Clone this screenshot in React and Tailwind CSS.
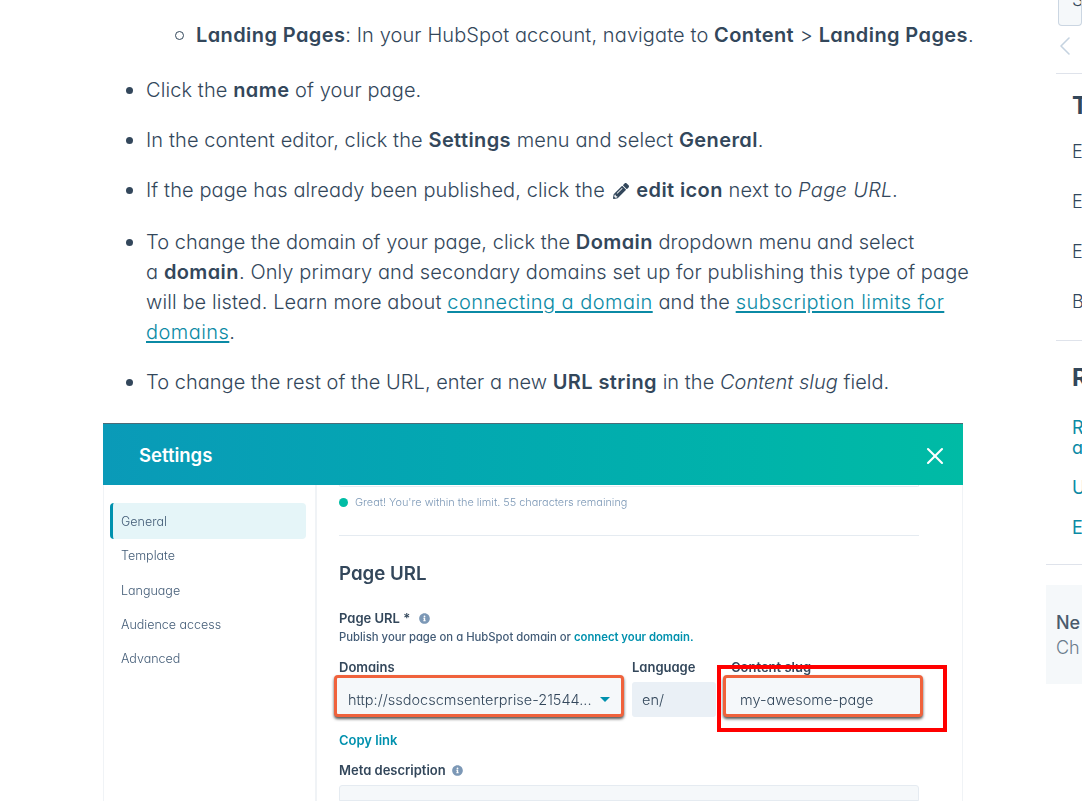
import React from "react";
import { FaPencilAlt, FaInfoCircle } from "react-icons/fa";
import { X, ChevronLeft } from "lucide-react";

const B = ({ children }) => <strong className="font-semibold tracking-[0.4px]">{children}</strong>;
const A = ({ children }) => <a className="tracking-[0.45px] text-[#0b8aa5] underline underline-offset-2">{children}</a>;

function Li({ children, className = "" }) {
  return (
    <li className={`flex items-start whitespace-nowrap ${className}`}>
      <span className="mt-[12px] mr-[13px] h-[7px] w-[7px] shrink-0 rounded-full bg-[#33475b]" />
      <div>{children}</div>
    </li>
  );
}

function Shot() {
  return (
    <div className="ml-[103px] mt-[26px] flex h-[378px] w-[860px] flex-col overflow-hidden text-[#33475b] blur-[0.3px]">
      <div className="flex h-[62px] shrink-0 items-center justify-between border-t border-[#4b6b78] bg-gradient-to-r from-[#0a9ab8] to-[#00bba5] pl-[36px] pr-[14px] pt-[2px]">
        <span className="text-[18.5px] font-semibold text-white">Settings</span>
        <X className="h-[28px] w-[28px] text-white" strokeWidth={1.8} />
      </div>
      <div className="flex min-h-0 flex-1 border-x border-[#f0f3f6]">
        <nav className="w-[213px] shrink-0 border-r-2 border-[#f0f3f6] pl-[6px] pr-[9px] pt-[18px] text-[12.5px] font-light text-[#425b76]">
          <div className="flex h-[36px] items-center rounded-sm border-l-[3px] border-[#0091ae] bg-[#e5f5f8] pl-[8px] pt-[2px]">General</div>
          <div className="flex h-[34px] items-center pl-[11px]">Template</div>
          <div className="mt-[1px] flex h-[34px] items-center pl-[11px]">Language</div>
          <div className="flex h-[34px] items-center pl-[11px]">Audience access</div>
          <div className="flex h-[34px] items-center pl-[11px]">Advanced</div>
        </nav>
        <div className="ml-[22px] flex w-[580px] flex-col">
          <div className="h-[5px] rounded-b-sm border-x border-b border-[#e5ebf1]" />
          <div className="mt-[9px] flex h-[12px] items-center text-[10.9px] font-light text-[#7c98b6]">
            <span className="mr-[7px] h-[9px] w-[9px] rounded-full bg-[#00bda5]" />
            Great! You're within the limit. 55 characters remaining
          </div>
          <div className="mt-[27px] border-t border-[#e5ebf1]" />
          <h2 className="mt-[26px] text-[18.7px] font-semibold leading-[24px]">Page URL</h2>
          <div className="mt-[23px] flex h-[18px] items-center text-[13px] font-semibold">
            Page URL *<FaInfoCircle className="ml-[9px] h-[11px] w-[11px] text-[#7c98b6]" />
          </div>
          <div className="mt-[2px] h-[16px] whitespace-nowrap text-[11.3px] font-medium leading-[16px] text-[#425b76]">
            Publish your page on a HubSpot domain or <span className="font-semibold text-[#0091ae]">connect your domain.</span>
          </div>
          <div className="relative mt-[14px] flex gap-[8px]">
            <div className="-ml-[5px] w-[290px] shrink-0">
              <div className="ml-[5px] h-[16px] text-[13px] font-semibold leading-[16px]">Domains</div>
              <div className="flex h-[42px] items-center justify-between rounded-[4px] border-[3px] border-[#f0623c] bg-[#f5f8fa] pl-[11px] pr-[11px] pt-[6px] text-[14.5px] font-light shadow-[0_2px_3px_#555]">
                <span className="whitespace-nowrap">http://ssdocscmsenterprise-21544...</span>
                <span className="h-0 w-0 border-x-[5px] border-t-[5px] border-x-transparent border-t-[#0091ae]" />
              </div>
            </div>
            <div className="w-[84px] shrink-0">
              <div className="h-[16px] text-[13px] font-semibold leading-[16px]">Language</div>
              <div className="mt-[7px] flex h-[35px] items-center rounded-[3px] bg-[#eaf0f6] pl-[10px] text-[14.5px] font-light">en/</div>
            </div>
            <div className="-ml-[1px] w-[200px] shrink-0">
              <div className="ml-[8px] h-[16px] text-[13px] font-semibold leading-[16px]">Content slug</div>
              <div className="flex h-[42px] items-center rounded-[4px] border-[3px] border-[#f0623c] bg-[#f5f8fa] pl-[14px] pt-[6px] text-[14.5px] font-light shadow-[0_2px_3px_#555]">my-awesome-page</div>
            </div>
            <div className="absolute left-[378px] top-[6px] h-[67px] w-[230px] border-[4px] border-[#ff0000]" />
          </div>
          <div className="mt-[14px] h-[18px] text-[13px] font-semibold leading-[18px] text-[#0091ae]">Copy link</div>
          <div className="mt-[12px] flex h-[18px] items-center text-[13px] font-semibold">
            Meta description<FaInfoCircle className="ml-[6px] h-[11px] w-[11px] text-[#7c98b6]" />
          </div>
          <div className="mt-[6px] h-[40px] rounded-t-[3px] border border-[#e5ebf1] bg-[#f5f8fa]" />
        </div>
      </div>
    </div>
  );
}

function Side() {
  return (
    <aside className="ml-[83px] w-[36px] shrink-0 overflow-hidden whitespace-nowrap text-[18px] font-light text-[#33475b]">
      <div className="ml-[10px] h-[74px] border-b border-[#dfe3eb]">
        <div className="ml-[2px] h-[26px] overflow-hidden rounded-b-[4px] border-x border-b border-[#cbd6e2] bg-[#f5f8fa] pl-[13px] leading-[18px] text-[#33475b]"><div className="-mt-[9px]">S</div></div>
        <ChevronLeft className="-ml-[7px] mt-[4px] h-[32px] w-[32px] text-[#c5d3e0]" strokeWidth={1.2} />
      </div>
      <div className="ml-[10px] h-[267px] border-b border-[#dfe3eb] pl-[16px] pt-[17px]">
        <div className="text-[24px] font-bold leading-[30px]">T</div>
        <div className="mt-[19px] leading-[24px]">E</div>
        <div className="mt-[26px] leading-[24px]">E</div>
        <div className="mt-[26px] leading-[24px]">E</div>
        <div className="mt-[26px] leading-[24px]">B</div>
      </div>
      <div className="h-[224px] border-b border-[#dfe3eb] pl-[26px] pt-[22px]">
        <div className="text-[24px] font-bold leading-[30px]">R</div>
        <div className="mt-[25px] font-normal leading-[20px] text-[#0b8aa5]">R<br />a</div>
        <div className="mt-[20px] font-normal leading-[20px] text-[#0b8aa5]">U</div>
        <div className="mt-[20px] font-normal leading-[20px] text-[#0b8aa5]">E</div>
      </div>
      <div className="mt-[20px] h-[99px] bg-[#f5f8fa] pl-[10px] pt-[25px] leading-[25px]">
        <div className="font-medium text-[#4a5b6c]">Ne</div>
        <div className="text-[#6b7c8c]">Ch</div>
      </div>
    </aside>
  );
}

export default function App() {
  return (
    <div className="flex h-[801px] w-[1082px] overflow-hidden bg-white font-['Inter',sans-serif] text-[#33475b] [font-feature-settings:'cv11']">
      <main className="w-[963px] shrink-0">
        <div className="pt-[20px] text-[20px] font-light leading-[30px] tracking-[0.1px]">
          <div className="ml-[175px] flex items-start whitespace-nowrap">
            <span className="mt-[11px] mr-[12px] h-[9px] w-[9px] shrink-0 rounded-full border-[1.5px] border-[#33475b]" />
            <div><B>Landing Pages</B>: In your HubSpot account, navigate to <B>Content</B> &gt; <B>Landing Pages</B>.</div>
          </div>
          <ul className="ml-[126px] mt-[25px] flex flex-col gap-[20px]">
            <Li>Click the <B>name</B> of your page.</Li>
            <Li>In the content editor, click the <B>Settings</B> menu and select <B>General</B>.</Li>
            <Li className="pb-[2px]">
              <span>If the page has already been published, click the </span>
              <FaPencilAlt className="mx-[2px] inline h-[16px] w-[16px] align-[-2px]" />
              <span> <B>edit icon</B> next to <em className="tracking-[0.3px]">Page URL.</em></span>
            </Li>
            <Li>
              <span className="tracking-[0.03px]">To change the domain of your page, click the <B>Domain</B> dropdown menu and select</span><br />
              a <B>domain</B>. Only primary and secondary domains set up for publishing this type of page<br />
              will be listed. Learn more about <A>connecting a domain</A> and the <A>subscription limits for</A><br />
              <A>domains</A>.
            </Li>
            <Li><span className="tracking-[0.03px]">To change the rest of the URL, enter a new <B>URL string</B> in the <em>Content slug</em> field.</span></Li>
          </ul>
        </div>
        <Shot />
      </main>
      <Side />
    </div>
  );
}
